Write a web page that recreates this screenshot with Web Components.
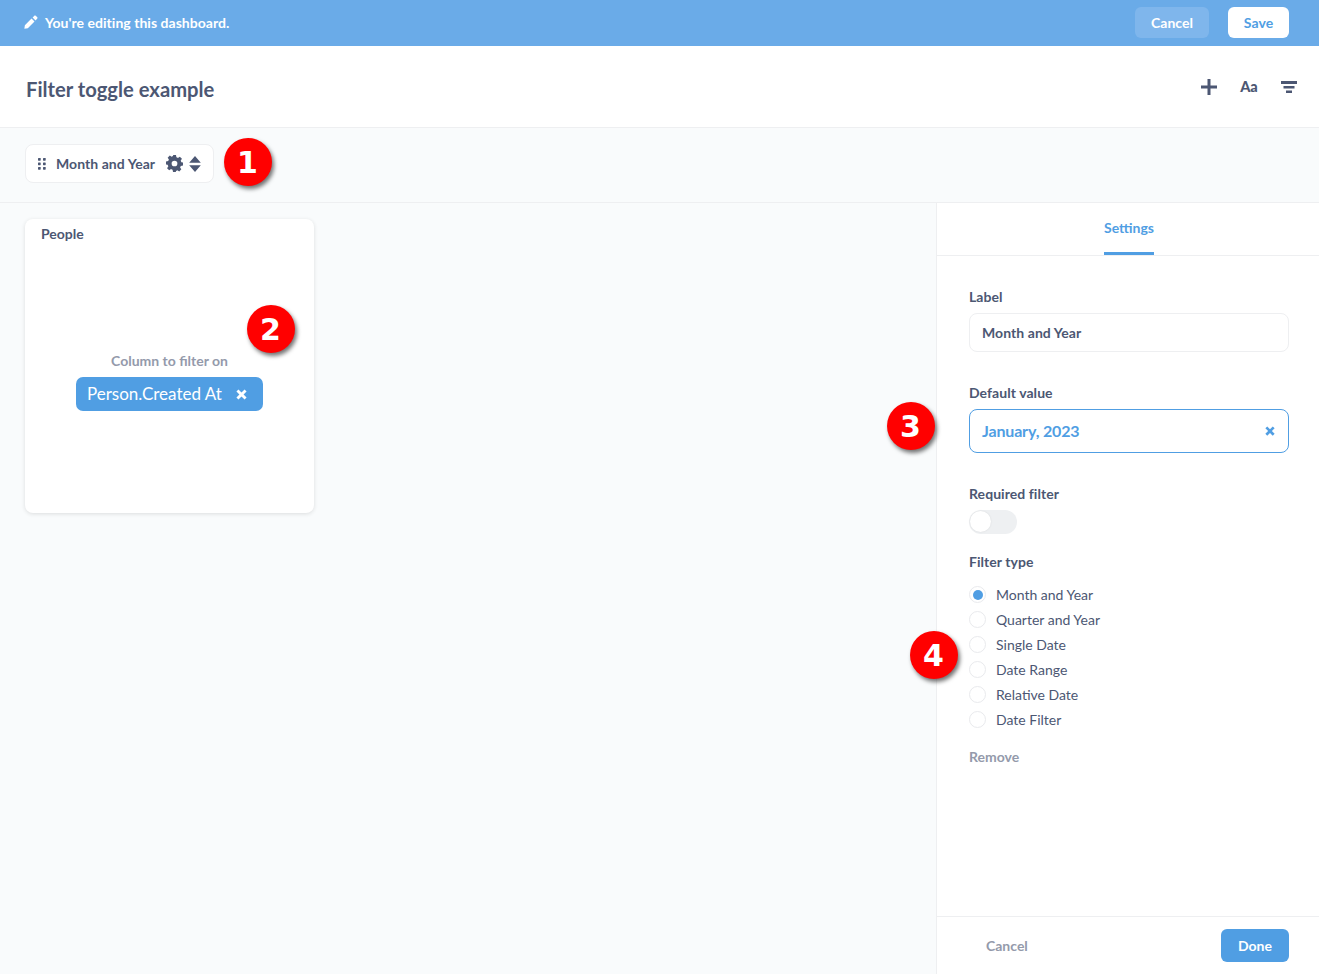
<!DOCTYPE html>
<html lang="en"><head><meta charset="utf-8"><title>Filter toggle example</title>
<style>
html,body{margin:0;height:100%;overflow:hidden}
body{font-family:Lato,"Liberation Sans",sans-serif;color:#4c5773;background:#f9fbfc}
dash-app{display:flex;flex-direction:column;height:974px;position:relative}
</style></head><body>
<dash-app>
  <edit-bar></edit-bar>
  <dash-header></dash-header>
  <param-bar></param-bar>
  <dash-main>
    <dash-canvas></dash-canvas>
    <side-panel></side-panel>
  </dash-main>
  <step-badge n="1" style="left:223.5px;top:138px"></step-badge>
  <step-badge n="2" style="left:246.5px;top:305px"></step-badge>
  <step-badge n="3" style="left:886.5px;top:402px"></step-badge>
  <step-badge n="4" style="left:909.5px;top:631px"></step-badge>
</dash-app>
<script>
const X='<path d="M3.600 .6 8 5 12.400 .6 15.400 3.600 11 8 15.400 12.400 12.400 15.400 8 11 3.600 15.400 .6 12.400 5 8 .6 3.600z" fill="currentColor"/>';
function def(name,html){customElements.define(name,class extends HTMLElement{constructor(){super();this.attachShadow({mode:'open'}).innerHTML=typeof html==='function'?html(this):html;}});}
def('edit-bar',`<style>
:host{display:flex;align-items:center;height:46px;flex:none;background:#6aabe8;color:#fff;font-weight:700;font-size:14px;padding:0 30px 2px 24px;box-sizing:border-box;letter-spacing:.03px}
svg{width:14px;height:14px;margin-right:7px;flex:none}
.m{flex:1}
.b{height:31px;line-height:31px;border-radius:6px;text-align:center;box-sizing:border-box}
.c{width:74px;background:#7fb6ec;margin-right:19px;color:#fff;}
.s{width:61px;background:#fff;color:#509ee3}
</style>
<svg viewBox="0 0 16 16"><path fill="currentColor" d="M1 11.6 0.4 15.6 4.4 15 12 7.4 8.6 4zM9.8 2.8 13.2 6.2 15 4.4c.6-.6.6-1.400 0-2L13.600 1c-.6-.6-1.400-.6-2 0z"/></svg>
<span>You're editing this dashboard.</span><span class="m"></span>
<span class="b c">Cancel</span><span class="b s">Save</span>`);
def('dash-header',`<style>
:host{display:flex;align-items:center;height:82px;flex:none;box-sizing:border-box;background:#fff;border-bottom:1px solid #eeeff1;padding:0 20px 0 26px}
h1{margin:0;font-size:20.2px;font-weight:700;flex:1;color:#4c5773;position:relative;top:2px}
.i{width:20px;display:flex;justify-content:center;align-items:center;margin-left:20px;height:20px;color:#4c5773}
.aa{font-weight:900;font-size:14.500px}
</style><h1>Filter toggle example</h1>
<span class="i"><svg width="16" height="16" viewBox="0 0 16 16"><path fill="currentColor" d="M6.500 0h3v6.500H16v3H9.500V16h-3V9.500H0v-3h6.500z"/></svg></span>
<span class="i aa">Aa</span>
<span class="i"><svg width="16" height="14" viewBox="0 0 16 14"><path fill="currentColor" d="M0 1h16v3H0zM2.500 6h11v2.500h-11zM5 10.500h6V13H5z"/></svg></span>`);
def('param-bar',`<style>
:host{display:flex;align-items:center;height:75px;flex:none;box-sizing:border-box;border-bottom:1px solid #eeeff1;padding:0 25px 3px;background:#f9fbfc}
.w{display:flex;align-items:center;width:189px;height:39px;box-sizing:border-box;background:#fff;border:1px solid #eeeff1;border-radius:8px;padding-left:12px;font-weight:700;font-size:14px;position:relative}
.t{margin-left:10px;flex:1;letter-spacing:.05px}
.g{margin-right:6px;display:block}
.a{margin-right:12px;display:block}
</style><div class="w">
<svg width="8" height="12" viewBox="0 0 8 12"><g fill="#4c5773"><rect x="0" y="0" width="2.700" height="2.700" rx=".6"/><rect x="5" y="0" width="2.700" height="2.700" rx=".6"/><rect x="0" y="4.500" width="2.700" height="2.700" rx=".6"/><rect x="5" y="4.500" width="2.700" height="2.700" rx=".6"/><rect x="0" y="9" width="2.700" height="2.700" rx=".6"/><rect x="5" y="9" width="2.700" height="2.700" rx=".6"/></g></svg>
<span class="t">Month and Year</span>
<svg class="g" width="17" height="17" viewBox="0 0 16 16"><path fill="#4c5773" fill-rule="evenodd" d="M6.600 0h2.800l.4 2.100c.5.150 1 .4 1.400.65l1.800-1.200 2 2-1.200 1.800c.3.450.5.900.65 1.400L16 7.100v2.800l-2.100.4c-.15.5-.35 1-.65 1.400l1.200 1.800-2 2-1.800-1.200c-.4.3-.9.5-1.400.65L9.400 16H6.600l-.4-2.100c-.5-.15-1-.35-1.400-.65l-1.800 1.200-2-2 1.200-1.800c-.3-.4-.5-.9-.65-1.400L0 8.900V6.100l2.100-.4c.15-.5.35-.95.65-1.400l-1.200-1.800 2-2 1.800 1.200c.4-.25.9-.5 1.400-.65zM8 5.300a2.700 2.700 0 1 0 0 5.400 2.700 2.700 0 0 0 0-5.400z"/></svg>
<svg class="a" width="12" height="16" viewBox="0 0 12 16"><path fill="#4c5773" d="M6 0l5.800 6.800H.2zM.2 9.200h11.600L6 16z"/></svg>
</div>`);
def('dash-main',`<style>:host{display:flex;flex:1;min-height:0}</style><slot></slot>`);
def('dash-canvas',`<style>
:host{display:block;flex:1;min-width:0;padding:16px 25px;box-sizing:border-box;background:#f9fbfc}
.card{width:289px;height:294px;box-sizing:border-box;background:#fff;border-radius:8px;box-shadow:0 1px 4px rgba(0,0,0,.12);padding:6px 16px 0;display:flex;flex-direction:column}
.h{font-weight:700;font-size:14px;line-height:17px}
.c{flex:1;display:flex;flex-direction:column;align-items:center;padding-top:110px}
.l{font-size:14px;font-weight:700;color:#949aab;line-height:17px}
.p{margin-top:8px;display:flex;align-items:center;height:34px;box-sizing:border-box;width:187px;background:#509ee3;color:#fff;border-radius:7px;padding:0 0 2px 11px;font-size:17px}
.p span{flex:1}.p svg{margin-right:16px;width:11px;height:11px;position:relative;top:1px}
</style><div class="card"><div class="h">People</div><div class="c"><div class="l">Column to filter on</div>
<div class="p"><span>Person.Created At</span><svg viewBox="0 0 16 16">${X}</svg></div></div></div>`);
def('radio-item',(el)=>`<style>
:host{display:flex;align-items:center;height:25px;font-size:14px;color:#4c5773}
.r{width:15px;height:15px;border:1px solid #e9eaed;border-radius:50%;margin-right:10px;background:#fff;display:flex;align-items:center;justify-content:center;flex:none;margin-left:0}
.d{width:10px;height:10px;border-radius:50%;background:#509ee3}
</style><span class="r">${el.hasAttribute('checked')?'<span class="d"></span>':''}</span><slot></slot>`);
def('side-panel',`<style>
:host{display:flex;flex-direction:column;width:383px;flex:none;box-sizing:border-box;background:#fff;border-left:1px solid #eeeff1;font-size:14px}
.tabs{height:53px;flex:none;box-sizing:border-box;border-bottom:1px solid #eeeff1;display:flex;justify-content:center}
.tab{color:#509ee3;font-weight:700;height:52px;box-sizing:border-box;border-bottom:3px solid #509ee3;padding-top:16px;line-height:17px;width:50px;text-align:center;position:relative;left:1px}
.body{flex:1;padding:32px 30px 0 32px;min-height:0}
.lab{font-weight:700;line-height:17px;height:17px;letter-spacing:.06px}
.inp{margin-top:8px;height:39px;box-sizing:border-box;border:1px solid #eeeff1;border-radius:8px;padding:0 12px;display:flex;align-items:center;font-weight:700;color:#4c5773;letter-spacing:.06px}
.date{margin-top:8px;height:44px;box-sizing:border-box;border:1px solid #509ee3;border-radius:8px;padding:0 13px 2px 12px;display:flex;align-items:center;font-weight:700;color:#509ee3;font-size:16px;letter-spacing:-.15px}
.date span{flex:1}.date svg{width:10px;height:10px;position:relative;top:1px}
.tog{display:block;margin-top:8px;width:48px;height:24px;border-radius:12px;background:#eef0f2;position:relative}
.tog i{position:absolute;left:1px;top:1px;width:21px;height:21px;border-radius:50%;background:#fff;box-shadow:0 0 2px rgba(0,0,0,.1)}
.rad{margin-top:12px}
.rm{margin-top:16px;font-weight:700;color:#949aab;line-height:17px}
.foot{height:57px;flex:none;border-top:1px solid #eeeff1;display:flex;align-items:center;padding:0 30px 0 49px;font-weight:700;box-sizing:content-box}
.foot .c{flex:1;color:#949aab}
.done{width:68px;height:33px;line-height:33px;text-align:center;background:#509ee3;color:#fff;border-radius:6px}
</style>
<div class="tabs"><div class="tab">Settings</div></div>
<div class="body">
<div class="lab">Label</div>
<div class="inp">Month and Year</div>
<div class="lab" style="margin-top:32px">Default value</div>
<div class="date"><span>January, 2023</span><svg viewBox="0 0 16 16">${X}</svg></div>
<div class="lab" style="margin-top:32px">Required filter</div>
<span class="tog"><i></i></span>
<div class="lab" style="margin-top:19px">Filter type</div>
<div class="rad">
<radio-item checked>Month and Year</radio-item>
<radio-item>Quarter and Year</radio-item>
<radio-item>Single Date</radio-item>
<radio-item>Date Range</radio-item>
<radio-item>Relative Date</radio-item>
<radio-item>Date Filter</radio-item>
</div>
<div class="rm">Remove</div>
</div>
<div class="foot"><span class="c">Cancel</span><span class="done">Done</span></div>`);
def('step-badge',(el)=>`<style>
:host{position:absolute;width:48px;height:48px;border-radius:50%;background:#f00;box-shadow:2px 3px 4px rgba(0,0,0,.55);color:#fff;font:700 30px/50px "DejaVu Sans",sans-serif;text-align:center}
</style>${el.getAttribute('n')}`);
</script>
</body></html>
